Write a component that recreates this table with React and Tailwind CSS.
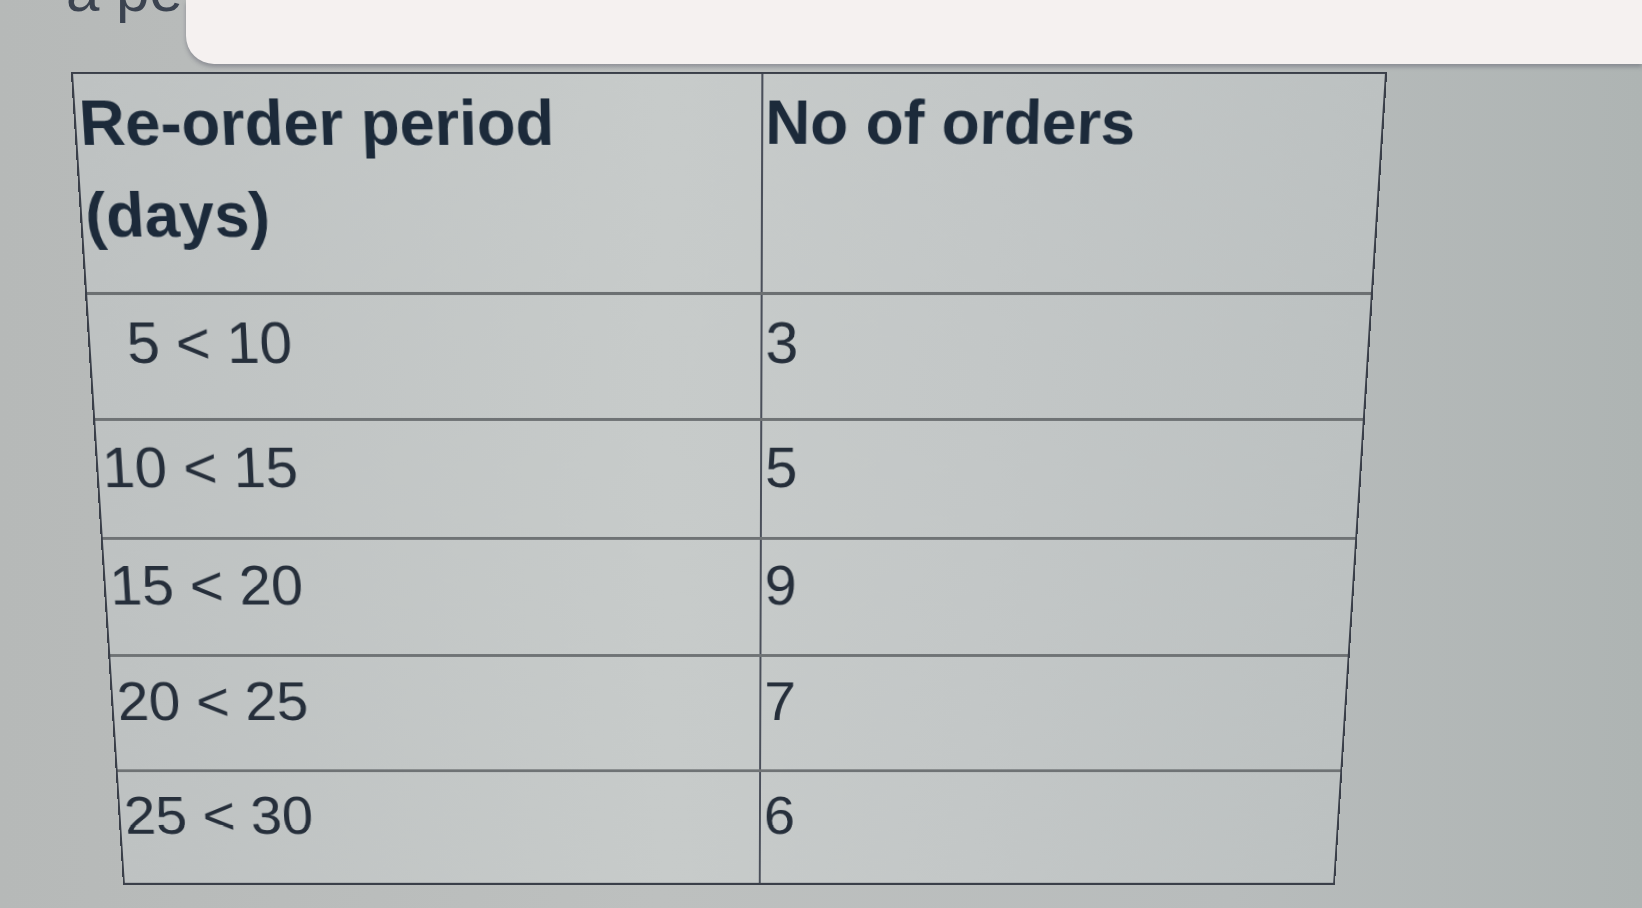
const rows = [
  { range: '5 < 10', count: '3', h: 'h-[125px]', indent: 'pl-[36px]' },
  { range: '10 < 15', count: '5', h: 'h-[121px]', indent: 'pl-[4px]' },
  { range: '15 < 20', count: '9', h: 'h-[122px]', indent: 'pl-[4px]' },
  { range: '20 < 25', count: '7', h: 'h-[123px]', indent: 'pl-[4px]' },
  { range: '25 < 30', count: '6', h: 'h-[121px]', indent: 'pl-[4px]' },
]

export default function App() {
  return (
    <div
      className="h-[908px] w-full overflow-hidden bg-[linear-gradient(90deg,#b6b9b8_0%,#bdc0bf_40%,#b8bcbc_75%,#aeb4b3_100%)]"
      style={{ fontFamily: '"Liberation Sans", Arial, sans-serif' }}
    >
      {/* top strip: cut-off line of text + white card edge */}
      <div className="flex h-[64px]">
        <div className="w-[186px] overflow-hidden">
          <p className="-mt-[42px] pl-[66px] text-[60px] leading-[66px] text-[#3b4350] whitespace-nowrap">
            a pe
          </p>
        </div>
        <div className="flex-1 rounded-bl-[28px] bg-[#f5f1f0] shadow-[0_3px_4px_rgba(60,60,80,0.35)]" />
      </div>

      <div className="ml-[98px] mt-[17px] w-[1262px] [transform:perspective(2000px)_rotateX(-11.5deg)]">
        <div className="border-2 border-[#3a3f49] bg-[linear-gradient(90deg,#bec2c2_0%,#c7cbca_45%,#c3c7c7_70%,#bcc1c1_100%)]">
          <div className="grid h-[212px] grid-cols-[660px_1fr] border-b-[3px] border-[#6c7072]">
            <div className="pl-[3px] pt-[2px] text-[61px] font-bold leading-[88px] text-[#1c2a3a]">
              Re-order period
              <br />
              (days)
            </div>
            <div className="border-l-2 border-[#4a4f5a] pl-[2px] pt-[2px] text-[60px] font-bold leading-[88px] text-[#1c2a3a]">
              No of orders
            </div>
          </div>
          {rows.map((r, i) => (
            <div
              key={r.range}
              className={`grid grid-cols-[660px_1fr] ${r.h} ${i < rows.length - 1 ? 'border-b-[3px] border-[#6f7375]' : ''}`}
            >
              <div className={`${r.indent} pt-[14px] text-[58px] leading-[66px] text-[#262f3b]`}>{r.range}</div>
              <div className="border-l-2 border-[#4a4f5a] pl-[3px] pt-[14px] text-[58px] leading-[66px] text-[#262f3b]">
                {r.count}
              </div>
            </div>
          ))}
        </div>
      </div>
    </div>
  )
}
